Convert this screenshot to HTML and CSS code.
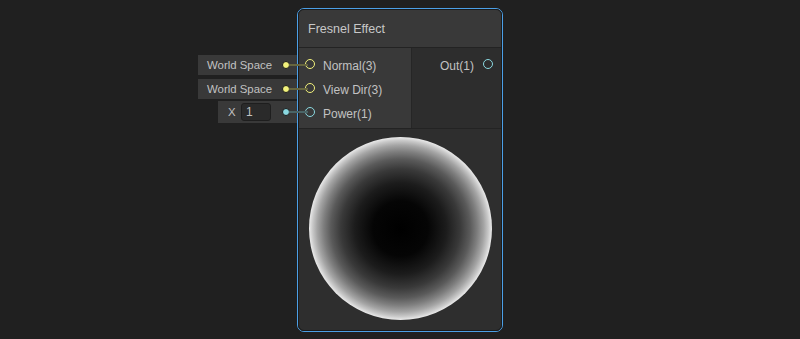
FILE: index.html
```html
<!DOCTYPE html>
<html lang="en">
<head>
    <meta charset="UTF-8">
    <title>Fresnel Effect</title>
    <link rel="stylesheet" href="styles.css">
</head>
<body>
    <div class="graph">
        <div class="slots">
            <div class="slot">
                <span class="slot-label">World Space</span>
                <span class="dot dot-yellow"></span>
            </div>
            <div class="slot">
                <span class="slot-label">World Space</span>
                <span class="dot dot-yellow"></span>
            </div>
            <div class="slot slot-value">
                <span class="slot-label">X</span>
                <span class="field">1</span>
                <span class="dot dot-cyan"></span>
            </div>
        </div>

        <div class="node">
            <div class="node-inner">
                <div class="node-title">Fresnel Effect</div>
                <div class="ports">
                    <div class="inputs">
                        <div class="port"><span class="ring ring-yellow"></span><span class="port-name">Normal(3)</span></div>
                        <div class="port"><span class="ring ring-yellow"></span><span class="port-name">View Dir(3)</span></div>
                        <div class="port"><span class="ring ring-cyan"></span><span class="port-name">Power(1)</span></div>
                    </div>
                    <div class="outputs">
                        <div class="port port-out"><span class="port-name">Out(1)</span><span class="ring ring-cyan"></span></div>
                    </div>
                </div>
                <div class="preview">
                    <div class="sphere"></div>
                </div>
            </div>
        </div>
    </div>
</body>
</html>
```

FILE: styles.css
```css
* {
    margin: 0;
    padding: 0;
    box-sizing: border-box;
}

body {
    background: #202020;
    font-family: 'Liberation Sans', Arial, sans-serif;
    font-size: 12px;
    color: #c2c2c2;
    height: 339px;
    overflow: hidden;
}

.graph {
    display: flex;
    align-items: flex-start;
    padding: 8px 0 0 198px;
}

/* default value slots on the left of the node */
.slots {
    width: 99px;
    margin-top: 47px;
    display: flex;
    flex-direction: column;
    align-items: flex-end;
    gap: 4px;
}

.slot {
    position: relative;
    width: 99px;
    height: 20px;
    background: #393939;
    display: flex;
    align-items: center;
    padding: 0 7px 0 9px;
}

.slot-label {
    flex: 1;
    font-size: 11.4px;
}

.slot-value {
    width: 79px;
    height: 22px;
    margin-top: -2px;
    padding-left: 10px;
}

.slot-value .slot-label {
    flex: none;
    width: 13px;
}

.field {
    width: 30px;
    height: 18px;
    margin-right: 11px;
    background: #2a2a2a;
    border: 1px solid #1e1e1e;
    border-radius: 3px;
    padding-left: 4px;
    line-height: 16px;
}

.dot {
    position: relative;
    width: 8px;
    height: 8px;
    border-radius: 50%;
    border: 1.5px solid #1a1a1a;
}

.dot::after {
    content: "";
    position: absolute;
    left: 6px;
    top: 1.5px;
    width: 19px;
    height: 2px;
    z-index: 2;
}

.dot-yellow { background: #f2f27c; }
.dot-yellow::after { background: #66663f; }
.dot-cyan { background: #8ad8e0; }
.dot-cyan::after { background: #4a6466; }

/* node */
.node {
    width: 206px;
    height: 324px;
    border: 1px solid #4b9fe6;
    border-radius: 7px;
}

.node-inner {
    height: 100%;
    border: 1px solid #1b1b1b;
    border-radius: 6px;
    overflow: hidden;
    display: flex;
    flex-direction: column;
    background: #2e2e2e;
}

.node-title {
    height: 38px;
    background: #393939;
    border-bottom: 1px solid #232323;
    padding-left: 9px;
    line-height: 38px;
    font-size: 12.5px;
    color: #c8c8c8;
}

.ports {
    display: flex;
    height: 81px;
    border-bottom: 1px solid #232323;
}

.inputs {
    width: 113px;
    background: #393939;
    border-right: 1px solid #262626;
    padding-top: 4px;
}

.outputs {
    flex: 1;
    background: #2d2d2d;
    padding-top: 4px;
}

.port {
    height: 24px;
    display: flex;
    align-items: center;
    gap: 8px;
    padding-left: 6px;
}

.port-name {
    padding-top: 3px;
}

.port-out {
    justify-content: flex-end;
    padding: 0 8px 0 0;
    gap: 9px;
}

.ring {
    width: 10px;
    height: 10px;
    border-radius: 50%;
    border: 1.5px solid;
}

.ring-yellow { border-color: #f2f27c; }
.ring-cyan { border-color: #8ad8e0; }

.preview {
    flex: 1;
    display: flex;
    align-items: center;
    justify-content: center;
    padding-bottom: 2px;
}

.sphere {
    width: 183px;
    height: 183px;
    border-radius: 50%;
    background: radial-gradient(circle closest-side,
        #000 0%,
        #050505 30%,
        #1c1c1c 50%,
        #393939 65%,
        #5a5a5a 76%,
        #7e7e7e 84%,
        #a4a4a4 91%,
        #c8c8c8 96%,
        #ebebeb 100%);
}
```
